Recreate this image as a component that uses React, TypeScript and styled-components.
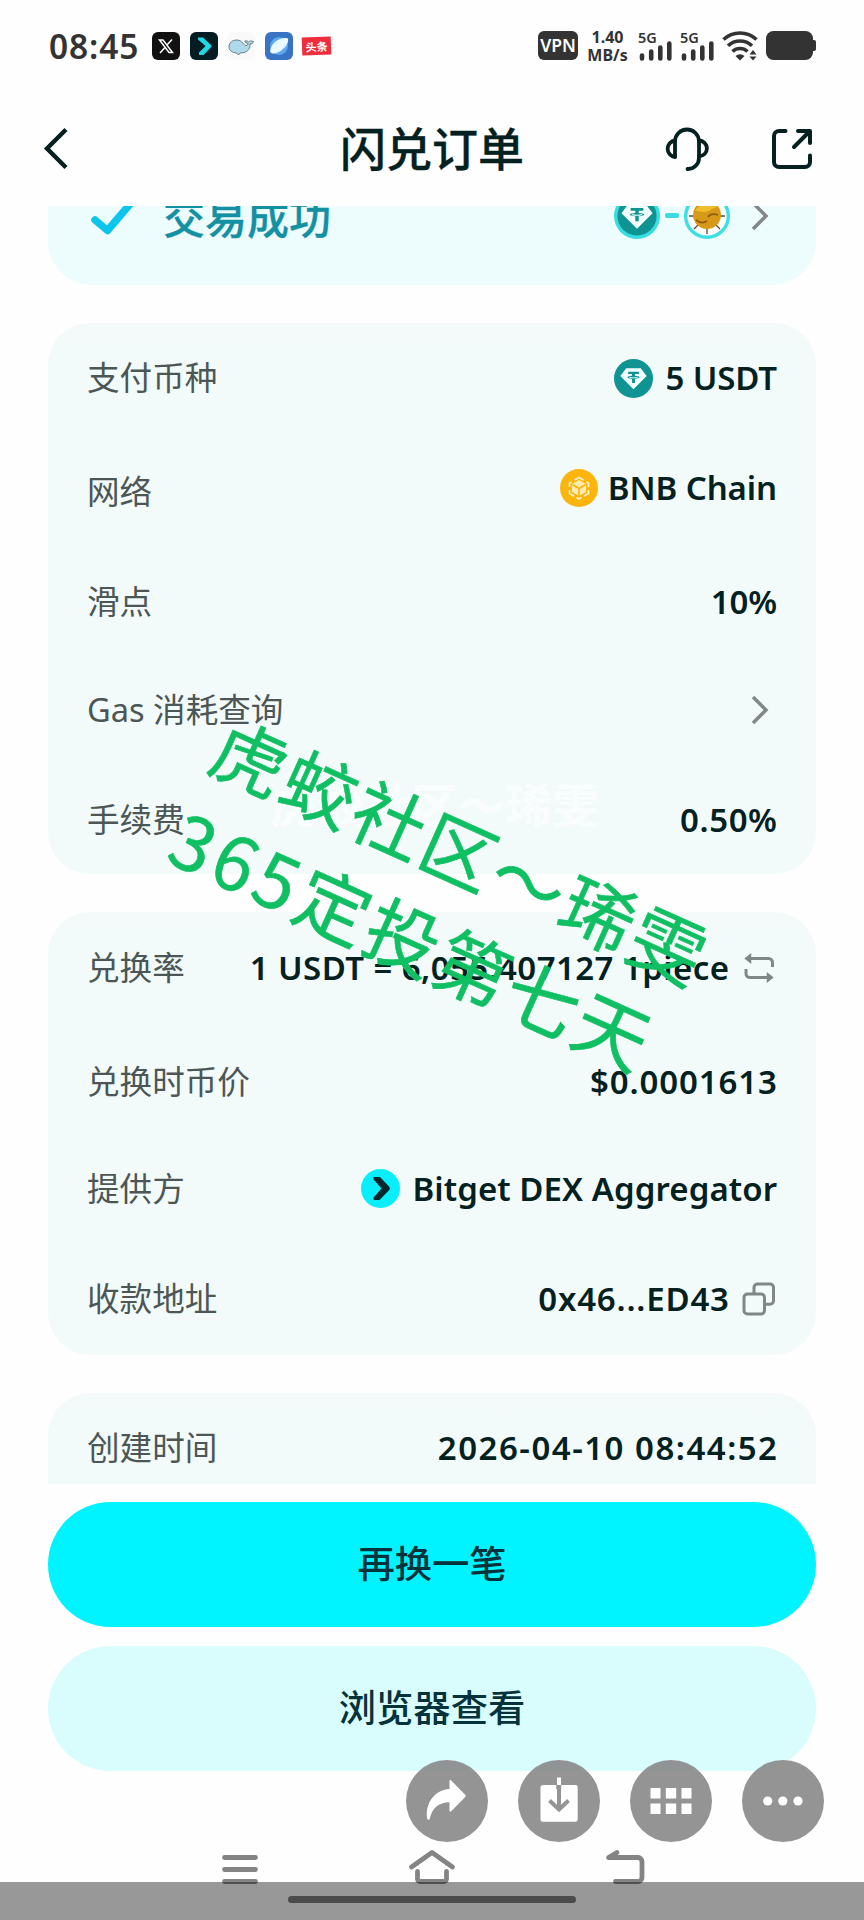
import { FC, ReactNode } from "react";
import styled, { createGlobalStyle } from "styled-components";

const font = `"Noto Sans", "Noto Sans CJK SC", sans-serif`;
const cjk = `"Noto Sans CJK SC", "Noto Sans", sans-serif`;

const color = {
  ink: "#04201f",
  label: "#4c5655",
  icon: "#808786",
  status: "#333333",
  cyan: "#00f4ff",
  tether: "#0f9393",
};

const App: FC = () => {
  return (
    <Screen>
      <GlobalStyle />
      <StatusBar>
        <Clock>08:45</Clock>
        <AppIcons>
          <XIcon />
          <WalletIcon />
          <WhaleIcon />
          <BrowserIcon />
          <NewsBadge>
            <span>头条</span>
          </NewsBadge>
        </AppIcons>
        <Indicators>
          <Vpn>VPN</Vpn>
          <Speed>
            <span>1.40</span>
            <span>MB/s</span>
          </Speed>
          <Signal />
          <Signal />
          <WifiIcon />
          <BatteryIcon />
        </Indicators>
      </StatusBar>

      <Header>
        <svg width="28" height="44" viewBox="0 0 28 44" fill="none" stroke={color.ink} strokeWidth="4.4">
          <path d="M25 2.5 6 21.5 25 40.5" />
        </svg>
        <Title>闪兑订单</Title>
        <HeaderActions>
          <HeadsetIcon />
          <ShareOutIcon />
        </HeaderActions>
      </Header>

      <Content>
        <ResultCard>
          <svg width="48" height="40" viewBox="0 0 48 40" fill="none" stroke="#0cc5ec" strokeWidth="7.500" strokeLinecap="round" strokeLinejoin="round">
            <path d="M7 24 19.500 34.500 43 7" />
          </svg>
          <ResultText>交易成功</ResultText>
          <Pair>
            <TetherIcon size={46} ring />
            <Dash />
            <PieceIcon />
          </Pair>
          <Chevron />
        </ResultCard>

        <Card $height={551}>
          <Row $height={110}>
            <Label>支付币种</Label>
            <Value>
              <TetherIcon size={39} />
              <Text $gap={12}>5 USDT</Text>
            </Value>
          </Row>
          <Row $height={117}>
            <Label>网络</Label>
            <Value $lift>
              <BnbIcon />
              <Text $gap={10}>BNB Chain</Text>
            </Value>
          </Row>
          <Row $height={104}>
            <Label>滑点</Label>
            <Value>
              <Text>10%</Text>
            </Value>
          </Row>
          <Row $height={111}>
            <Label>Gas 消耗查询</Label>
            <Chevron />
          </Row>
          <Row $height={110}>
            <Label>手续费</Label>
            <Value>
              <Text $track={0.6}>0.50%</Text>
            </Value>
          </Row>
        </Card>

        <Card $height={443}>
          <Row $height={112}>
            <Label>兑换率</Label>
            <Value>
              <Text $track={0.42}>1 USDT = 6,055.407127 1piece</Text>
              <SwapIcon />
            </Value>
          </Row>
          <Row $height={115}>
            <Label>兑换时币价</Label>
            <Value>
              <Text $track={0.9}>$0.0001613</Text>
            </Value>
          </Row>
          <Row $height={99}>
            <Label>提供方</Label>
            <Value>
              <BitgetIcon />
              <Text $gap={12} $track={0.07}>Bitget DEX Aggregator</Text>
            </Value>
          </Row>
          <Row $height={122}>
            <Label>收款地址</Label>
            <Value>
              <Text $track={0.8}>0x46...ED43</Text>
              <CopyIcon />
            </Value>
          </Row>
        </Card>

        <Card $height={200}>
          <Row $height={110}>
            <Label>创建时间</Label>
            <Value>
              <Text $track={1.5}>2026-04-10 08:44:52</Text>
            </Value>
          </Row>
        </Card>
      </Content>

      <Footer>
        <Button $primary>再换一笔</Button>
        <Button>浏览器查看</Button>
      </Footer>

      <Ghost>虎蛟社区～琋雯</Ghost>
      <Watermark>
        <div>虎蛟社区～琋雯</div>
        <div>
          <Digits>365</Digits>定投第七天
        </div>
      </Watermark>

      <FloatBar>
        <Round>
          <path d="M43.500 21c0-1 1-1.300 1.700-.5l14 14.200c.6.800.6 1.600 0 2.400l-14 14.200c-.7.800-1.700.5-1.700-.5v-8.500C32 42.500 26.500 48 23.800 58.500c-.3 1.600-2.300 1.600-2.600 0C19 44 28 30 43.500 29Z" />
        </Round>
        <Round>
          <path d="M24.500 25h13.700v4h5v-4h14a2.500 2.500 0 0 1 2.500 2.500v31.800a2.500 2.500 0 0 1-2.500 2.500H25a2.500 2.500 0 0 1-2.500-2.500V27.500A2.500 2.500 0 0 1 25 25ZM39 17.500h4V25h-4Z" />
          <path d="M41 26v22M31.500 40.500 41 49.500l9.500-9" fill="none" stroke="#949494" strokeWidth="4" />
        </Round>
        <Round>
          <path d="M20.500 28h10v10.500h-10ZM35.800 28h10.400v10.500H35.800ZM51.500 28h10v10.500h-10ZM20.500 43.500h10V54h-10ZM35.800 43.500h10.400V54H35.800ZM51.500 43.500h10V54h-10Z" />
        </Round>
        <Round>
          <circle cx="25.700" cy="41" r="4.600" />
          <circle cx="40.800" cy="41" r="4.600" />
          <circle cx="56" cy="41" r="4.600" />
        </Round>
      </FloatBar>

      <NavBar>
        <svg width="38" height="36" viewBox="0 0 38 36">
          <path d="M3.500 8.500h31M3.500 20.500h31M3.500 32.500h31" />
        </svg>
        <svg width="48" height="36" viewBox="0 0 48 36">
          <path d="M3.500 18 24 3.500 44.500 18M9.500 22.500v7.500a2.500 2.500 0 0 0 2.500 2.500h24a2.500 2.500 0 0 0 2.500-2.500v-7.500" />
        </svg>
        <svg width="42" height="36" viewBox="0 0 42 36">
          <path d="M13 3.500 4.500 8.500H34a4 4 0 0 1 4 4v16a4 4 0 0 1-4 4H11.500" />
        </svg>
      </NavBar>
      <GestureBar>
        <Handle />
      </GestureBar>
    </Screen>
  );
};

export default App;

const XIcon: FC = () => (
  <svg width="28" height="28" viewBox="0 0 28 28">
    <rect width="28" height="28" rx="6" fill="#111" />
    <path d="M7.500 8h3.500l9.500 12.500H17ZM20 7.500l-5.500 6M13 15.500l-5 5.500" fill="none" stroke="#fff" strokeWidth="1.500" />
  </svg>
);

const WalletIcon: FC = () => (
  <svg width="28" height="28" viewBox="0 0 28 28">
    <rect width="28" height="28" rx="6" fill="#051d22" />
    <path d="M8 5.500h5l8 7.500c.8.700.8 1.500 0 2.200L13.500 23H9v-2.500l6.500-6.500L8 7.500Z" fill="#20d8e4" />
  </svg>
);

const WhaleIcon: FC = () => (
  <svg width="28" height="28" viewBox="0 0 28 28">
    <rect width="28" height="28" rx="6" fill="#f9f9f9" />
    <path
      d="M2 15c0-5 4-7 8-7 6 0 6 6 10 5.500 1-.5 1-1.500.7-2.500-1.700 0-3-.7-3-2 1.500-.5 3 0 3.800 1 1-1 3-1.500 5-.5-.5 2-2 2.500-3.500 2.500.5 4-2 7.500-6 8.500l-4 .5-1.500 2-2-2C5 20.500 2 18.500 2 15Z"
      fill="#aed9ea"
      stroke="#53656e"
      strokeWidth=".8"
    />
  </svg>
);

const BrowserIcon: FC = () => (
  <svg width="28" height="28" viewBox="0 0 28 28">
    <rect width="28" height="28" rx="6" fill="#3873c4" />
    <circle cx="14" cy="14" r="9" fill="#5ba9ef" />
    <path d="M5 19C6 12 13 5 22 6c3 1 0 8-4 11-4 4-12 7-13 2Z" fill="#e9f9ff" />
  </svg>
);

const Signal: FC = () => (
  <SignalBox>
    <span>5G</span>
    <svg width="35" height="20" viewBox="0 0 35 20" fill="none" stroke={color.status} strokeWidth="4.600" strokeLinecap="round">
      <path d="M4 14.500v3M13.200 10.500v7M22.300 6.500v11M31.300 2.500v15" />
    </svg>
  </SignalBox>
);

const WifiIcon: FC = () => (
  <svg width="36" height="30" viewBox="0 0 36 30">
    <g fill="none" stroke={color.status} strokeWidth="3.600">
      <path d="M1.500 8.500a24 24 0 0 1 33 0M6 14.800a17.500 17.500 0 0 1 24 0M10.500 20.500a11 11 0 0 1 15 0" />
    </g>
    <path d="M18 29.500l-4.500-4.500a6.500 6.500 0 0 1 9 0ZM27.500 23.500l3.500-4.500 3.500 4.500ZM27.500 25.500l3.500 4 3.500-4Z" fill={color.status} />
  </svg>
);

const BatteryIcon: FC = () => (
  <svg width="50" height="29" viewBox="0 0 50 29" fill={color.status}>
    <rect width="47" height="29" rx="7.500" />
    <rect x="45" y="9" width="5" height="11" rx="2" />
  </svg>
);

const HeadsetIcon: FC = () => (
  <svg width="46" height="46" viewBox="0 0 46 46" fill="none" stroke={color.ink} strokeWidth="3.800" strokeLinecap="round" strokeLinejoin="round">
    <path d="M11 30.500V15.500a12 12 0 0 1 24 0V32a11 11 0 0 1-11.500 11" />
    <path d="M11 14.500a8.300 8.300 0 0 0 0 16.500M35 14.500a7.900 7.900 0 0 1 0 15.800" />
  </svg>
);

const ShareOutIcon: FC = () => (
  <svg width="42" height="42" viewBox="0 0 42 42" fill="none" stroke={color.ink} strokeWidth="4" strokeLinecap="round" strokeLinejoin="round">
    <path d="M14.500 3H8a5 5 0 0 0-5 5v26a5 5 0 0 0 5 5h26a5 5 0 0 0 5-5v-6.500M27 3h12v12M38 4 23 19" />
  </svg>
);

const Chevron: FC = () => (
  <ChevronSvg width="20" height="32" viewBox="0 0 20 32">
    <path d="M4 3 17 16 4 29" />
  </ChevronSvg>
);

const TetherIcon: FC<{ size: number; ring?: boolean }> = ({ size, ring }) => (
  <svg width={size} height={size} viewBox="0 0 40 40">
    <circle cx="20" cy="20" r="20" fill={ring ? "#35dde0" : color.tether} />
    {ring && <circle cx="20" cy="20" r="17" fill={color.tether} />}
    <path d="M12.500 9.500h15L33.500 17.500 20 31 6.500 17.500Z" fill="#f2ffff" />
    <path d="M14.500 13h11v2.500h-4v1.800c3 .2 4.700.7 4.700 1.500s-1.700 1.300-4.700 1.500V24.500h-3v-4.200c-3-.2-4.700-.7-4.700-1.500s1.700-1.300 4.700-1.500v-1.800h-4Z" fill={color.tether} />
    <path d="M15.500 18.700c2.500.8 6.500.8 9 0" stroke="#f2ffff" strokeWidth=".9" fill="none" />
  </svg>
);

const PieceIcon: FC = () => (
  <svg width="46" height="46" viewBox="0 0 46 46">
    <circle cx="23" cy="23" r="21.300" fill="#fff" stroke="#3cdfe4" strokeWidth="3.400" />
    <path d="M23 5v36M5 23h36M10 10l26 26M36 10 10 36" stroke="#594a32" strokeWidth="1.300" />
    <circle cx="23" cy="22" r="14" fill="#d79a18" />
    <path d="M11 17c5-6 15-8 22-3-5 1-8 5-13 5-4 0-6-1-9-2Z" fill="#f0be2c" />
    <path d="M24 24c3-4 7-3 10-2M12 27c5 4 8 3 11 1" stroke="#8e5c10" strokeWidth="1.800" fill="none" />
  </svg>
);

const BnbIcon: FC = () => (
  <svg width="38" height="38" viewBox="0 0 38 38">
    <circle cx="19" cy="19" r="19" fill="#fbb50c" />
    <g fill="none" stroke="#fff3c4" strokeWidth="1.800">
      <path d="M14.500 11 19 8.500l4.500 2.500M26.500 13l2 1.200v4M28.500 21v3.500L24 27M21.500 28.500 19 30l-2.500-1.500M14 27l-4.500-2.500V21M9.500 18v-3.800l2-1.200" />
    </g>
    <path d="m19 11 7 4v8l-7 4-7-4v-8Z" fill="#ffecad" />
    <path d="m12.500 15.500 6.500 4 6.500-4M19 19.500V27" stroke="#fbb50c" strokeWidth="1.600" fill="none" />
  </svg>
);

const BitgetIcon: FC = () => (
  <svg width="39" height="39" viewBox="0 0 39 39">
    <circle cx="19.500" cy="19.500" r="19.500" fill="#08eefa" />
    <path d="M12.500 8h6.500l9 9.500c1.200 1.200 1.200 2.600 0 3.800L18.500 31H12.500v-2.500l8-9-8-9Z" fill="#06272e" />
  </svg>
);

const SwapIcon: FC = () => (
  <LineSvg width="34" height="34" viewBox="0 0 34 34">
    <path d="M6 7.500h20.500a4 4 0 0 1 4 4v4.500M4 18v4.500a4 4 0 0 0 4 4h20" />
    <path d="M8.500 3.500v8l-5-4ZM25.500 22.500v8l5-4Z" fill={color.icon} strokeWidth="1.500" />
  </LineSvg>
);

const CopyIcon: FC = () => (
  <LineSvg width="34" height="34" viewBox="0 0 34 34">
    <rect x="2" y="12" width="20.500" height="20" rx="3.500" />
    <path d="M12 11.500V5.500a3.500 3.500 0 0 1 3.500-3.500H28a3.500 3.500 0 0 1 3.500 3.500v13.200a3.500 3.500 0 0 1-3.500 3.500h-5" />
  </LineSvg>
);

const Round: FC<{ children: ReactNode }> = ({ children }) => (
  <RoundButton>
    <svg width="82" height="82" viewBox="0 0 82 82" fill="#fff">
      {children}
    </svg>
  </RoundButton>
);

const GlobalStyle = createGlobalStyle`
  * { box-sizing: border-box; }
  body { margin: 0; background: #fff; }
  svg { display: block; flex: none; }
`;

const Screen = styled.div`
  position: relative;
  display: flex;
  flex-direction: column;
  width: 864px;
  height: 1920px;
  overflow: hidden;
  background: #fefefe;
  color: ${color.ink};
  font-family: ${font};
`;

const StatusBar = styled.div`
  display: flex;
  align-items: center;
  flex: none;
  height: 91px;
  padding: 0 48px 0 49px;
  color: ${color.status};
`;
const Clock = styled.span`
  width: 103px;
  font-size: 33.500px;
  font-weight: 600;
  letter-spacing: 0.9px;
`;
const AppIcons = styled.div`
  display: flex;
  align-items: center;
  gap: 9.500px;
`;
const NewsBadge = styled.div`
  display: grid;
  place-items: center;
  width: 29px;
  height: 18px;
  background: #ee2d3d;
  color: #fff;
  font: 700 11px/18px ${cjk};
  transform: rotate(-2deg);
`;
const Indicators = styled.div`
  display: flex;
  align-items: center;
  margin-left: auto;
  gap: 8px;
`;
const Vpn = styled.span`
  width: 40px;
  height: 29px;
  margin-right: 3px;
  border-radius: 6px;
  background: ${color.status};
  color: #fff;
  font-size: 17.500px;
  font-weight: 600;
  line-height: 29px;
  text-align: center;
`;
const Speed = styled.span`
  display: flex;
  flex-direction: column;
  align-items: center;
  width: 37px;
  margin-right: 4px;
  font-size: 16px;
  font-weight: 700;
  line-height: 18px;
`;
const SignalBox = styled.span`
  display: flex;
  flex-direction: column;
  width: 34px;
  height: 30px;
  font-size: 14.500px;
  font-weight: 600;
  line-height: 13px;
  svg {
    margin-top: -3px;
  }
`;

const Header = styled.header`
  display: grid;
  grid-template-columns: 1fr auto 1fr;
  align-items: center;
  flex: none;
  height: 115px;
  padding: 0 51px 0 41px;
`;
const Title = styled.h1`
  margin: 0;
  font: 500 46px/60px ${cjk};
  padding: 0 0 6px 10px;
  -webkit-text-stroke: 0.3px;
`;
const HeaderActions = styled.div`
  display: flex;
  align-items: center;
  justify-content: flex-end;
  gap: 61px;
`;

const Content = styled.main`
  flex: none;
  height: 1278px;
  padding: 0 48px;
  overflow: hidden;
`;
const ResultCard = styled.section`
  display: flex;
  align-items: center;
  height: 139px;
  margin-top: -60px;
  padding: 0 47px 0 40px;
  border-radius: 44px;
  background: #edfcfd;
`;
const ResultText = styled.span`
  margin-left: 27px;
  color: #1490a3;
  font: 500 42px/50px ${cjk};
  -webkit-text-stroke: 0.3px;
`;
const Pair = styled.div`
  display: flex;
  align-items: center;
  margin-left: auto;
  margin-right: 19px;
  gap: 5px;
`;
const Dash = styled.i`
  width: 14px;
  height: 5px;
  border-radius: 2px;
  background: #3cdbe2;
`;
const Card = styled.section<{ $height: number }>`
  height: ${(props) => props.$height}px;
  margin-top: 38px;
  padding: 0 39px;
  border-radius: 42px;
  background: linear-gradient(#f4f9f9, #f2fbfa 40px);
`;
const Row = styled.div<{ $height: number }>`
  display: flex;
  align-items: center;
  justify-content: space-between;
  height: ${(props) => props.$height}px;
  > svg {
    margin-right: 8px;
  }
`;
const Label = styled.span`
  color: ${color.label};
  font-size: 32.600px;
  line-height: 44px;
`;
const Value = styled.div<{ $lift?: boolean }>`
  display: flex;
  align-items: center;
  margin-bottom: ${(props) => (props.$lift ? 7 : 0)}px;
`;
const Text = styled.span<{ $gap?: number; $track?: number }>`
  margin-left: ${(props) => props.$gap ?? 0}px;
  margin-right: ${(props) => -(props.$track ?? 0)}px;
  font-size: 33px;
  font-weight: 600;
  letter-spacing: ${(props) => props.$track ?? -0.1}px;
  line-height: 44px;
  white-space: nowrap;
`;
const ChevronSvg = styled.svg`
  fill: none;
  stroke: ${color.icon};
  stroke-width: 3.400;
`;
const LineSvg = styled.svg`
  margin-left: 13px;
  margin-right: 1px;
  fill: none;
  stroke: ${color.icon};
  stroke-width: 3;
`;

const Footer = styled.footer`
  display: flex;
  flex-direction: column;
  gap: 19px;
  padding: 18px 48px 0;
`;
const Button = styled.button<{ $primary?: boolean }>`
  height: 125px;
  padding: 0 0 5px;
  border: 0;
  border-radius: 63px;
  background: ${(props) => (props.$primary ? color.cyan : "#d9fdfd")};
  color: #06333b;
  font: 500 37.300px/50px ${cjk};
`;

const Ghost = styled.div`
  position: absolute;
  top: 773px;
  left: 270px;
  color: rgba(255, 255, 255, 0.65);
  font: 700 47px/60px ${cjk};
`;
const Watermark = styled.div`
  position: absolute;
  top: 693px;
  left: 239px;
  color: #11bf63;
  font: 400 74px/101px ${cjk};
  letter-spacing: 2.300px;
  white-space: nowrap;
  transform: rotate(24.200deg);
  transform-origin: 0 0;
  -webkit-text-stroke: 0.6px;
`;
const Digits = styled.span`
  letter-spacing: 4.500px;
`;

const FloatBar = styled.div`
  position: absolute;
  top: 1760px;
  right: 40.500px;
  display: flex;
  gap: 30px;
`;
const RoundButton = styled.div`
  width: 82px;
  height: 82px;
  border-radius: 50%;
  background: rgba(136, 136, 136, 0.9);
`;

const NavBar = styled.nav`
  position: absolute;
  top: 1849px;
  left: 221px;
  display: flex;
  justify-content: space-between;
  width: 425px;
  svg {
    fill: none;
    stroke: #848484;
    stroke-width: 4.800;
    stroke-linecap: round;
    stroke-linejoin: round;
  }
`;
const GestureBar = styled.div`
  position: absolute;
  right: 0;
  bottom: 0;
  left: 0;
  display: flex;
  justify-content: center;
  height: 38px;
  padding-top: 14px;
  background: rgba(0, 0, 0, 0.4);
`;
const Handle = styled.div`
  width: 288px;
  height: 7px;
  border-radius: 4px;
  background: #4b4b4b;
`;
